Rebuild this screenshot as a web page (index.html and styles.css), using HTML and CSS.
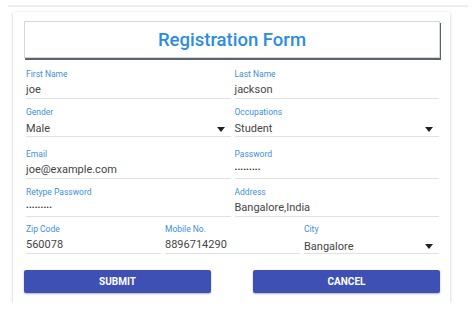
FILE: index.html
```html
<!DOCTYPE html>
<html lang="en">
<head>
  <meta charset="UTF-8" />
  <title>Registration Form</title>
  <link rel="stylesheet" href="styles.css">
</head>
<body>
  <div class="top-line"></div>

  <div class="card">
    <div class="title-box">Registration Form</div>

    <div class="row">
      <div class="field">
        <label>First Name</label>
        <div class="value">joe</div>
      </div>
      <div class="field">
        <label>Last Name</label>
        <div class="value">jackson</div>
      </div>
    </div>

    <div class="row">
      <div class="field">
        <label>Gender</label>
        <div class="value select">Male<span class="arrow"></span></div>
      </div>
      <div class="field">
        <label>Occupations</label>
        <div class="value select">Student<span class="arrow"></span></div>
      </div>
    </div>

    <div class="row spaced">
      <div class="field">
        <label>Email</label>
        <div class="value">joe@example.com</div>
      </div>
      <div class="field">
        <label>Password</label>
        <div class="value dots">•••••••••</div>
      </div>
    </div>

    <div class="row">
      <div class="field">
        <label>Retype Password</label>
        <div class="value dots">•••••••••</div>
      </div>
      <div class="field">
        <label>Address</label>
        <div class="value">Bangalore,India</div>
      </div>
    </div>

    <div class="row last">
      <div class="field">
        <label>Zip Code</label>
        <div class="value">560078</div>
      </div>
      <div class="field">
        <label>Mobile No.</label>
        <div class="value">8896714290</div>
      </div>
      <div class="field">
        <label>City</label>
        <div class="value select low">Bangalore<span class="arrow"></span></div>
      </div>
    </div>

    <div class="buttons">
      <button class="btn">SUBMIT</button>
      <button class="btn">CANCEL</button>
    </div>
  </div>
</body>
</html>
```

FILE: styles.css
```css
* {
  box-sizing: border-box;
}

body {
  margin: 0;
  padding: 5px 8px 0;
  font-family: Roboto, "Liberation Sans", sans-serif;
  background: #ffffff;
  color: #333;
}

.top-line {
  height: 2px;
  background: #eeeeee;
  width: 460px;
}

.card {
  width: 437px;
  margin: 5px 0 0 5px;
  padding: 9px 10px 10px 11px;
  background: #fff;
  box-shadow: 0 1px 3px rgba(0, 0, 0, 0.22);
}

.title-box {
  height: 37px;
  border: 1px solid #d6d6d6;
  box-shadow: 1px 2px 0 #58636e;
  color: #2a8de2;
  font-size: 18.5px;
  font-weight: 500;
  display: flex;
  align-items: center;
  justify-content: center;
}

.row {
  display: flex;
  gap: 4px;
  margin-top: 7px;
  padding: 0 1px 0 2px;
}

.title-box + .row {
  margin-top: 10px;
}

.row.spaced {
  margin-top: 11px;
}

.row.last {
  margin-top: 6px;
}

.field {
  flex: 1;
  min-width: 0;
}

.field label {
  display: block;
  height: 12px;
  line-height: 12px;
  font-size: 8.5px;
  color: #3d8fe0;
}

.value {
  height: 19px;
  line-height: 18px;
  font-size: 11px;
  color: #454545;
  border-bottom: 1px solid #e2e2e2;
  display: flex;
  align-items: center;
  padding-top: 1px;
}

.value.select {
  padding-top: 4px;
  justify-content: space-between;
}

.value.low {
  padding-top: 5px;
}

.value.dots {
  font-size: 8px;
  letter-spacing: 0.2px;
  color: #333;
}

.arrow {
  width: 0;
  height: 0;
  border-left: 4px solid transparent;
  border-right: 4px solid transparent;
  border-top: 5px solid #222;
  margin-right: 6px;
}

.buttons {
  display: flex;
  justify-content: space-between;
  margin-top: 16px;
}

.btn {
  width: 187px;
  height: 23px;
  border: none;
  border-radius: 2px;
  background: #3e50b4;
  color: #fff;
  font-family: Roboto, "Liberation Sans", sans-serif;
  font-size: 10px;
  font-weight: 700;
  box-shadow: 0 1px 2px rgba(0, 0, 0, 0.3);
}
```
